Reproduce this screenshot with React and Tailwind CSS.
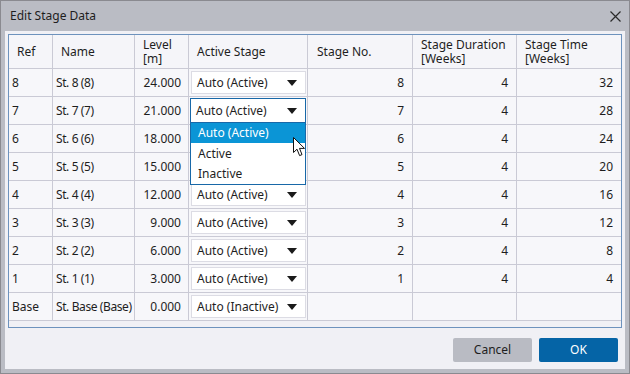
import React from "react";

const rows = [
  { ref: "8", name: "St. 8 (8)", level: "24.000", active: "Auto (Active)", no: "8", dur: "4", time: "32" },
  { ref: "7", name: "St. 7 (7)", level: "21.000", active: "Auto (Active)", no: "7", dur: "4", time: "28", open: true },
  { ref: "6", name: "St. 6 (6)", level: "18.000", active: "Auto (Active)", no: "6", dur: "4", time: "24", covered: true },
  { ref: "5", name: "St. 5 (5)", level: "15.000", active: "Auto (Active)", no: "5", dur: "4", time: "20", covered: true },
  { ref: "4", name: "St. 4 (4)", level: "12.000", active: "Auto (Active)", no: "4", dur: "4", time: "16" },
  { ref: "3", name: "St. 3 (3)", level: "9.000", active: "Auto (Active)", no: "3", dur: "4", time: "12" },
  { ref: "2", name: "St. 2 (2)", level: "6.000", active: "Auto (Active)", no: "2", dur: "4", time: "8" },
  { ref: "1", name: "St. 1 (1)", level: "3.000", active: "Auto (Active)", no: "1", dur: "4", time: "4" },
  { ref: "Base", name: "St. Base (Base)", level: "0.000", active: "Auto (Inactive)", no: "", dur: "", time: "" },
];

const line = "border-[#cacad5]";

// small black triangle of the combo box
function Arrow() {
  return (
    <svg width="10" height="6" viewBox="0 0 10 6" className="shrink-0">
      <path d="M0 0 L10 0 L5 6 Z" fill="#1a1a1a" />
    </svg>
  );
}

function Cursor() {
  return (
    <svg width="13" height="20" viewBox="0 0 13 20">
      <path
        d="M0.5 0.5 L0.5 15.5 L4 12.2 L6.6 18.6 L9 17.6 L6.5 11.4 L11.5 11.4 Z"
        fill="#fff"
        stroke="#111"
        strokeWidth="1"
        strokeLinejoin="round"
      />
    </svg>
  );
}

function TwoLine({ a, b }) {
  return (
    <div className="flex flex-col gap-[1px]">
      <div className="h-[13px] leading-[13px]">{a}</div>
      <div className="h-[13px] leading-[13px]">{b}</div>
    </div>
  );
}

function Combo({ value, open, covered }) {
  if (covered) {
    // hidden below the open drop-down list
    return <div className="h-full" />;
  }
  if (open) {
    return (
      <div className="relative h-full p-[1px]">
        <div className="flex h-full items-center justify-between border border-[#1868a8] bg-white pl-[5px] pr-[8px]">
          <span>{value}</span>
          <Arrow />
        </div>
        <div className="absolute left-[1px] right-[1px] top-[25px] z-10 flex flex-col border border-[#1868a8] bg-white">
          <div className="flex h-[20px] items-center bg-[#0b95d6] pl-[7px] text-white">Auto (Active)</div>
          <div className="flex h-[21px] items-center pl-[7px]">Active</div>
          <div className="flex h-[20px] items-center pl-[7px]">Inactive</div>
        </div>
        <div className="absolute left-[104px] top-[40px] z-20">
          <Cursor />
        </div>
      </div>
    );
  }
  return (
    <div className="h-full p-[2px] pr-[1px]">
      <div className="flex h-full items-center justify-between border border-[#dcdce4] bg-white pl-[5px] pr-[8px]">
        <span className="whitespace-nowrap">{value}</span>
        <Arrow />
      </div>
    </div>
  );
}

export default function App() {
  const cols = "grid grid-cols-[44px_82px_54px_119px_105px_104px_104px]";
  const head = `flex items-center border-r border-b ${line} bg-[#f5f5f9] pl-[8px]`;
  return (
    <div className="flex h-[374px] w-[630px] flex-col border border-[#8a8a90] bg-[#babcc4] font-['Noto_Sans',sans-serif] text-[12px] text-[#1e1e1e]">
      {/* title bar */}
      <div className="flex h-[30px] shrink-0 items-center justify-between pl-[9px] pr-[8px]">
        <span className="text-[12px] text-[#1e1e1e]">Edit Stage Data</span>
        <svg width="11" height="11" viewBox="0 0 11 11">
          <path d="M0.5 0.5 L10.5 10.5 M10.5 0.5 L0.5 10.5" stroke="#2a2a2a" strokeWidth="1.2" />
        </svg>
      </div>

      <div className="mx-[4px] mb-[4px] flex flex-1 flex-col bg-[#f0f0f5] px-[3px] pt-[3px]">
        {/* table */}
        <div className="border border-[#6d92bd] bg-[#f0f0f5]">
          <div className={`${cols} h-[34px]`}>
            <div className={head}>Ref</div>
            <div className={head}>Name</div>
            <div className={head}>
              <TwoLine a="Level" b="[m]" />
            </div>
            <div className={head}>Active Stage</div>
            <div className={`${head} pl-[9px]`}>Stage No.</div>
            <div className={head}>
              <TwoLine a="Stage Duration" b="[Weeks]" />
            </div>
            <div className={`flex items-center border-b ${line} bg-[#f5f5f9] pl-[8px]`}>
              <TwoLine a="Stage Time" b="[Weeks]" />
            </div>
          </div>

          {rows.map((r) => (
            <div key={r.ref} className={`${cols} h-[28px]`}>
              <div className={`flex items-center border-r border-b ${line} bg-[#f7f7fa] pl-[3px]`}>{r.ref}</div>
              <div className={`flex items-center whitespace-nowrap tracking-[-0.4px] border-r border-b ${line} bg-[#f7f7fa] pl-[3px]`}>{r.name}</div>
              <div className={`flex items-center justify-end border-r border-b ${line} bg-[#f7f7fa] pr-[7px]`}>{r.level}</div>
              <div className={`border-r border-b ${line} bg-[#f7f7fa]`}>
                <Combo value={r.active} open={r.open} covered={r.covered} />
              </div>
              <div className={`flex items-center justify-end border-r border-b ${line} bg-[#f7f7fa] pr-[8px]`}>{r.no}</div>
              <div className={`flex items-center justify-end border-r border-b ${line} bg-[#f7f7fa] pr-[8px]`}>{r.dur}</div>
              <div className={`flex items-center justify-end border-b ${line} bg-[#f7f7fa] pr-[8px]`}>{r.time}</div>
            </div>
          ))}
          <div className="h-[6px]" />
        </div>

        {/* buttons */}
        <div className="mt-[10px] flex justify-end gap-[7px] pr-[4px]">
          <button className="h-[24px] w-[79px] rounded-[2px] bg-[#b9bbc3] text-[#1e1e1e]">Cancel</button>
          <button className="h-[24px] w-[79px] rounded-[2px] bg-[#0564a6] text-white">OK</button>
        </div>
      </div>
    </div>
  );
}
